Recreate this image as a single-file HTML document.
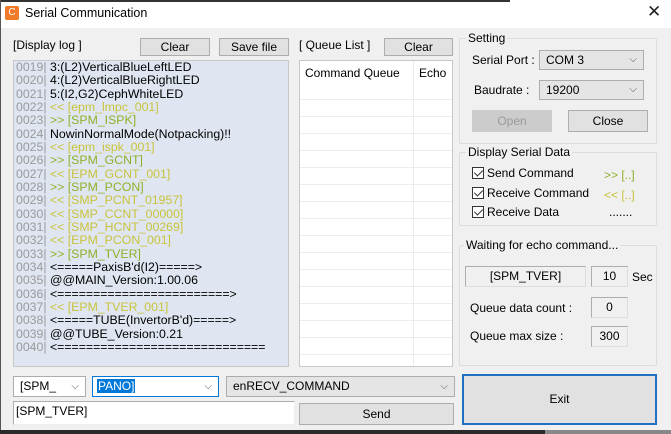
<!DOCTYPE html>
<html><head><meta charset="utf-8"><style>
*{box-sizing:border-box;margin:0;padding:0}
body{width:671px;height:434px;background:#f0f0f0;font-family:"Liberation Sans",sans-serif;font-size:12px;color:#000;position:relative;overflow:hidden}
.a{position:absolute}
.btn{position:absolute;background:#e1e1e1;border:1px solid #adadad;text-align:center;font-size:12px}
.grp{position:absolute;border:1px solid #dcdcdc;border-radius:2px}
.grp>.t{position:absolute;top:-8px;left:6px;background:#f0f0f0;padding:0 2px;font-size:12px}
.cmb{position:absolute;border:1px solid #adadad;background:#e5e5e5;padding-left:6px;font-size:12px}
.cmb .v{position:absolute;right:6px;top:0;font-size:10px;color:#555}
.box{position:absolute;border:1px solid #adadad;border-bottom-color:#ddd;border-right-color:#ddd;background:#f0f0f0;text-align:center}
.log div{height:13.33px;line-height:13.33px;white-space:nowrap}
.log .n{color:#9a9a9a}
.g{color:#8fb02a}.y{color:#c9c33c}
.chk{display:inline-block;width:12px;height:12px;border:1px solid #333;background:#fff;vertical-align:-2px;margin-right:3px;position:relative}
.chk:after{content:"";position:absolute;left:3px;top:0px;width:4px;height:7px;border:solid #333;border-width:0 1.5px 1.5px 0;transform:rotate(45deg)}
</style></head><body>
<div class="a" style="left:0;top:0;width:671px;height:28px;background:#fff"></div>
<div class="a" style="left:0;top:0;width:510px;height:2px;background:#333"></div>
<div class="a" style="left:0;top:0;width:1px;height:434px;background:#555"></div>
<div class="a" style="left:0;top:430px;width:545px;height:4px;background:#2a2a2a"></div>
<div class="a" style="left:545px;top:430px;width:126px;height:4px;background:#888"></div>
<div class="a" style="left:5px;top:6px;width:14px;height:14px;background:#ee7a2a;border-radius:2px;color:#fff;font-size:10px;text-align:center;line-height:14px">C</div>
<div class="a" style="left:25px;top:6px;font-size:12.5px">Serial Communication</div>
<div class="a" style="left:647px;top:2px;font-size:17px;color:#222">✕</div>

<div class="a" style="left:13px;top:38px;font-size:12px">[Display log ]</div>
<div class="btn" style="left:140px;top:38px;width:70px;height:18px;line-height:16px">Clear</div>
<div class="btn" style="left:219px;top:38px;width:70px;height:18px;line-height:16px">Save file</div>
<div class="a log" style="left:13px;top:60px;width:276px;height:307px;background:#dfe6f1;border:1px solid #c8c8c8;padding:0 0 0 2px;font-size:12.3px;overflow:hidden">
<div><span class="n">0019|</span> 3:(L2)VerticalBlueLeftLED</div>
<div><span class="n">0020|</span> 4:(L2)VerticalBlueRightLED</div>
<div><span class="n">0021|</span> 5:(I2,G2)CephWhiteLED</div>
<div><span class="n">0022|</span> <span class="y">&lt;&lt; [epm_lmpc_001]</span></div>
<div><span class="n">0023|</span> <span class="g">&gt;&gt; [SPM_ISPK]</span></div>
<div><span class="n">0024|</span> NowinNormalMode(Notpacking)!!</div>
<div><span class="n">0025|</span> <span class="y">&lt;&lt; [epm_ispk_001]</span></div>
<div><span class="n">0026|</span> <span class="g">&gt;&gt; [SPM_GCNT]</span></div>
<div><span class="n">0027|</span> <span class="y">&lt;&lt; [EPM_GCNT_001]</span></div>
<div><span class="n">0028|</span> <span class="g">&gt;&gt; [SPM_PCON]</span></div>
<div><span class="n">0029|</span> <span class="y">&lt;&lt; [SMP_PCNT_01957]</span></div>
<div><span class="n">0030|</span> <span class="y">&lt;&lt; [SMP_CCNT_00000]</span></div>
<div><span class="n">0031|</span> <span class="y">&lt;&lt; [SMP_HCNT_00269]</span></div>
<div><span class="n">0032|</span> <span class="y">&lt;&lt; [EPM_PCON_001]</span></div>
<div><span class="n">0033|</span> <span class="g">&gt;&gt; [SPM_TVER]</span></div>
<div><span class="n">0034|</span> &lt;=====PaxisB'd(I2)=====&gt;</div>
<div><span class="n">0035|</span> @@MAIN_Version:1.00.06</div>
<div><span class="n">0036|</span> &lt;========================&gt;</div>
<div><span class="n">0037|</span> <span class="y">&lt;&lt; [EPM_TVER_001]</span></div>
<div><span class="n">0038|</span> &lt;=====TUBE(InvertorB'd)=====&gt;</div>
<div><span class="n">0039|</span> @@TUBE_Version:0.21</div>
<div><span class="n">0040|</span> &lt;=============================</div>
</div>

<div class="a" style="left:299px;top:38px">[ Queue List ]</div>
<div class="btn" style="left:384px;top:38px;width:69px;height:18px;line-height:16px">Clear</div>
<div class="a" style="left:299px;top:60px;width:154px;height:307px;background:#fff;border:1px solid #c8c8c8;overflow:hidden;
background-image:repeating-linear-gradient(to bottom,transparent 0,transparent 16px,#ececec 16px,#ececec 17px);background-position:0 22px;background-repeat:repeat-y">
<div class="a" style="left:0;top:0;width:154px;height:38px;background:#fff"></div>
<div class="a" style="left:113px;top:0;width:1px;height:307px;background:#ececec"></div>
<div class="a" style="left:5px;top:5px">Command Queue</div>
<div class="a" style="left:119px;top:5px">Echo</div>
</div>

<div class="grp" style="left:459px;top:38px;width:198px;height:106px"><span class="t">Setting</span></div>
<div class="a" style="left:472px;top:53px">Serial Port :</div>
<div class="cmb" style="left:539px;top:50px;width:105px;height:20px;line-height:18px">COM 3<span class="v">⌵</span></div>
<div class="a" style="left:474px;top:83px">Baudrate :</div>
<div class="cmb" style="left:539px;top:80px;width:105px;height:20px;line-height:18px">19200<span class="v">⌵</span></div>
<div class="btn" style="left:472px;top:110px;width:80px;height:22px;line-height:20px;color:#9a9a9a;background:#ccc;border-color:#ccc">Open</div>
<div class="btn" style="left:568px;top:110px;width:80px;height:22px;line-height:20px">Close</div>

<div class="grp" style="left:459px;top:152px;width:198px;height:74px"><span class="t">Display Serial Data</span></div>
<div class="a" style="left:472px;top:166px"><span class="chk"></span>Send Command</div>
<div class="a" style="left:604px;top:168px" ><span class="g">&gt;&gt; [..]</span></div>
<div class="a" style="left:472px;top:186px"><span class="chk"></span>Receive Command</div>
<div class="a" style="left:604px;top:188px"><span class="y">&lt;&lt; [..]</span></div>
<div class="a" style="left:472px;top:205px"><span class="chk"></span>Receive Data</div>
<div class="a" style="left:609px;top:205px">.......</div>

<div class="grp" style="left:459px;top:245px;width:198px;height:121px"><span class="t" style="left:4px">Waiting for echo command...</span></div>
<div class="box" style="left:465px;top:266px;width:121px;height:21px;line-height:19px">[SPM_TVER]</div>
<div class="box" style="left:591px;top:266px;width:37px;height:21px;line-height:19px">10</div>
<div class="a" style="left:632px;top:270px">Sec</div>
<div class="a" style="left:470px;top:301px">Queue data count :</div>
<div class="box" style="left:591px;top:297px;width:37px;height:21px;line-height:19px">0</div>
<div class="a" style="left:470px;top:329px">Queue max size :</div>
<div class="box" style="left:591px;top:326px;width:37px;height:21px;line-height:19px">300</div>

<div class="cmb" style="left:13px;top:376px;width:73px;height:21px;line-height:19px;background:#fff">[SPM_<span class="v">⌵</span></div>
<div class="cmb" style="left:92px;top:376px;width:127px;height:21px;line-height:19px;background:#fff;border-color:#0078d7;padding-left:4px"><span style="background:#0078d7;color:#fff;padding:0 1px">PANO]</span><span class="v">⌵</span></div>
<div class="cmb" style="left:226px;top:376px;width:229px;height:21px;line-height:19px">enRECV_COMMAND<span class="v">⌵</span></div>
<div class="a" style="left:13px;top:401px;width:282px;height:24px;background:#fff;border:1px solid #adadad;border-right-color:#eee;border-bottom-color:#eee;padding:2px 0 0 2px">[SPM_TVER]</div>
<div class="btn" style="left:299px;top:403px;width:155px;height:22px;line-height:20px">Send</div>
<div class="btn" style="left:462px;top:374px;width:195px;height:51px;line-height:47px;border:2px solid #1e72c0">Exit</div>
</body></html>
